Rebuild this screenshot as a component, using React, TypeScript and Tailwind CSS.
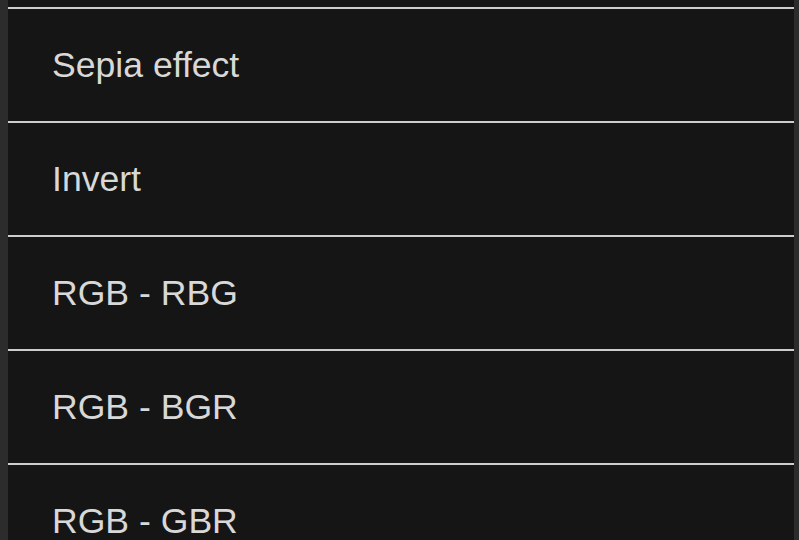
const effects = ["Sepia effect", "Invert", "RGB - RBG", "RGB - BGR", "RGB - GBR"]

const EffectRow = ({ label }: { label: string }) => {
  return (
    <li className="flex h-[114px] shrink-0 items-center border-t-2 border-[#cdcdcd] pt-[1px] pl-[44px] text-[35.6px] text-[#d8d8d8]">
      {label}
    </li>
  )
}

export default function App() {
  return (
    <div
      className="h-[540px] w-[799px] overflow-hidden bg-[#2c2c2c] pl-[8px] pr-[5px]"
      style={{ fontFamily: '"Liberation Sans", Arial, sans-serif' }}
    >
      <ul className="flex h-full flex-col bg-[#151515] pt-[7px]">
        {effects.map((effect) => (
          <EffectRow key={effect} label={effect} />
        ))}
      </ul>
    </div>
  )
}
